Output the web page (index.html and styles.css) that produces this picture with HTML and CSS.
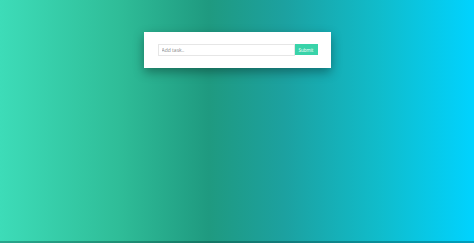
FILE: index.html
```html
<!DOCTYPE html>
<html>
<head>
<meta charset="utf-8">
<link rel="stylesheet" href="styles.css">
</head>
<body>
<div class="page">
  <form class="card">
    <input class="task-input" type="text" placeholder="Add task..">
    <button class="submit" type="button">Submit</button>
  </form>
</div>
<div class="edge"></div>
</body>
</html>
```
FILE: styles.css
```css
html, body {
  margin: 0;
  padding: 0;
  height: 243px;
  overflow: hidden;
}
body {
  display: flex;
  flex-direction: column;
  font-family: "Open Sans", "Liberation Sans", sans-serif;
  background: linear-gradient(to right, #3ddcb8 0%, #2fbd98 25%, #1f9a80 44%, #1ca1a0 60%, #10bccb 80%, #00d3ff 100%);
}
.page {
  height: 241px;
  display: flex;
  flex-direction: column;
  align-items: center;
  padding-top: 32px;
  box-sizing: border-box;
}
.card {
  width: 187px;
  box-sizing: border-box;
  background: #fff;
  padding: 12px 13px 12px 14px;
  display: flex;
  align-items: flex-start;
  box-shadow: 0 4px 10px rgba(0, 0, 0, 0.35);
  margin: 0;
}
.task-input {
  flex: 1;
  min-width: 0;
  height: 12px;
  box-sizing: border-box;
  border: 1px solid #e6e6e6;
  padding: 0 3px;
  font-family: inherit;
  font-size: 5px;
  color: #555;
  outline: none;
  margin: 0;
}
.task-input::placeholder {
  color: #888;
}
.submit {
  width: 23px;
  height: 11px;
  border: none;
  background: #39d3a9;
  color: #fff;
  font-family: inherit;
  font-size: 4.5px;
  padding: 0;
  margin: 0;
}
.edge {
  height: 2px;
  background: rgba(0, 40, 40, 0.3);
}
```
